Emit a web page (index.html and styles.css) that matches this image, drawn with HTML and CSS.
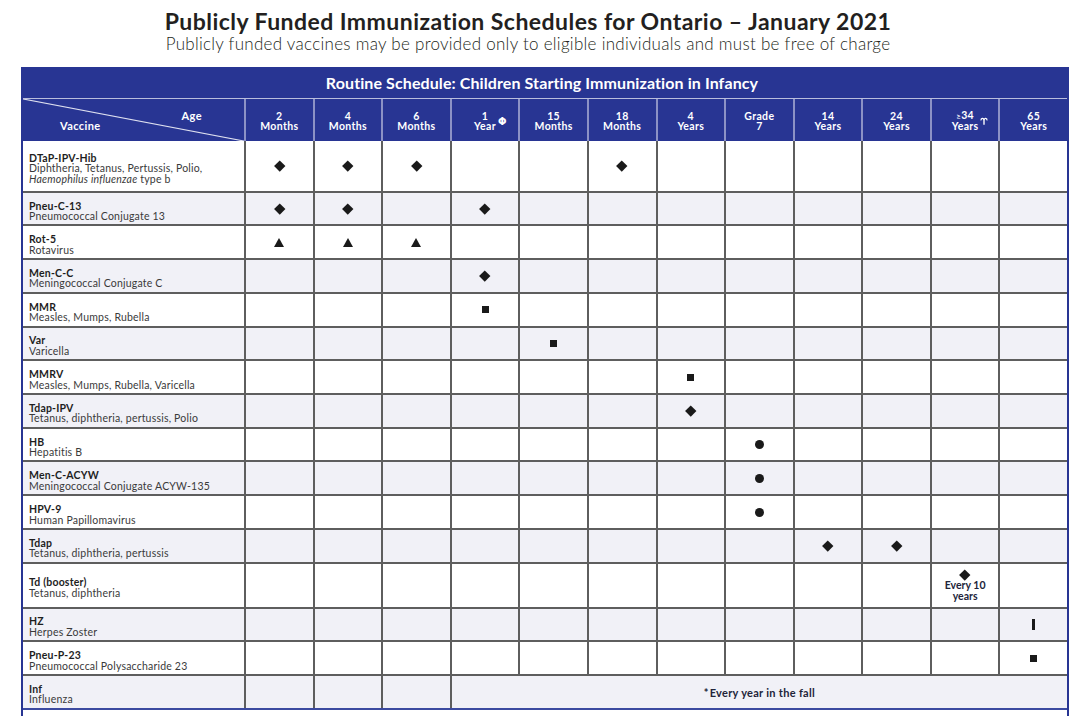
FILE: index.html
```html
<!DOCTYPE html>
<html lang="en">
<head>
<meta charset="utf-8">
<title>Publicly Funded Immunization Schedules for Ontario</title>
<link rel="stylesheet" href="styles.css">
</head>
<body>
<header class="doc-head">
  <h1 class="doc-title">Publicly Funded Immunization Schedules for Ontario – January 2021</h1>
  <p class="doc-sub">Publicly funded vaccines may be provided only to eligible individuals and must be free of charge</p>
</header>

<section class="sheet">
  <div class="sheet-title">Routine Schedule: Children Starting Immunization in Infancy</div>

  <div class="row head">
    <div class="hcell corner">
      <svg class="diag" viewBox="0 0 100 100" preserveAspectRatio="none"><line x1="0" y1="0" x2="100" y2="100" vector-effect="non-scaling-stroke"/></svg>
      <span class="age">Age</span>
      <span class="vac">Vaccine</span>
    </div>
    <div class="hcell"><span>2</span><span>Months</span></div>
    <div class="hcell"><span>4</span><span>Months</span></div>
    <div class="hcell"><span>6</span><span>Months</span></div>
    <div class="hcell"><span>1</span><span class="sup-line">Year<span class="sym">Φ</span></span></div>
    <div class="hcell"><span>15</span><span>Months</span></div>
    <div class="hcell"><span>18</span><span>Months</span></div>
    <div class="hcell"><span>4</span><span>Years</span></div>
    <div class="hcell"><span>Grade</span><span>7</span></div>
    <div class="hcell"><span>14</span><span>Years</span></div>
    <div class="hcell"><span>24</span><span>Years</span></div>
    <div class="hcell"><span><span class="ge">≥</span>34</span><span class="sup-line">Years<svg class="aries" viewBox="0 0 10 10" aria-label="Aries"><path d="M1.3 4.2 C1.1 1.4 4.6 0.6 5 4.2 L5 9.6 M5 4.2 C5.4 0.6 8.9 1.4 8.7 4.2"/></svg></span></div>
    <div class="hcell"><span>65</span><span>Years</span></div>
  </div>

  <div class="body">
    <div class="row tall">
      <div class="vcell"><b>DTaP-IPV-Hib</b><span>Diphtheria, Tetanus, Pertussis, Polio,</span><span><i>Haemophilus influenzae</i> type b</span></div>
      <div class="c"><i class="dia"></i></div><div class="c"><i class="dia"></i></div><div class="c"><i class="dia"></i></div>
      <div class="c"></div><div class="c"></div><div class="c"><i class="dia"></i></div>
      <div class="c"></div><div class="c"></div><div class="c"></div><div class="c"></div><div class="c"></div><div class="c"></div>
    </div>
    <div class="row alt">
      <div class="vcell"><b>Pneu-C-13</b><span>Pneumococcal Conjugate 13</span></div>
      <div class="c"><i class="dia"></i></div><div class="c"><i class="dia"></i></div><div class="c"></div>
      <div class="c"><i class="dia"></i></div><div class="c"></div><div class="c"></div>
      <div class="c"></div><div class="c"></div><div class="c"></div><div class="c"></div><div class="c"></div><div class="c"></div>
    </div>
    <div class="row">
      <div class="vcell"><b>Rot-5</b><span>Rotavirus</span></div>
      <div class="c"><i class="tri"></i></div><div class="c"><i class="tri"></i></div><div class="c"><i class="tri"></i></div>
      <div class="c"></div><div class="c"></div><div class="c"></div>
      <div class="c"></div><div class="c"></div><div class="c"></div><div class="c"></div><div class="c"></div><div class="c"></div>
    </div>
    <div class="row alt">
      <div class="vcell"><b>Men-C-C</b><span>Meningococcal Conjugate C</span></div>
      <div class="c"></div><div class="c"></div><div class="c"></div>
      <div class="c"><i class="dia"></i></div><div class="c"></div><div class="c"></div>
      <div class="c"></div><div class="c"></div><div class="c"></div><div class="c"></div><div class="c"></div><div class="c"></div>
    </div>
    <div class="row">
      <div class="vcell"><b>MMR</b><span>Measles, Mumps, Rubella</span></div>
      <div class="c"></div><div class="c"></div><div class="c"></div>
      <div class="c"><i class="sq"></i></div><div class="c"></div><div class="c"></div>
      <div class="c"></div><div class="c"></div><div class="c"></div><div class="c"></div><div class="c"></div><div class="c"></div>
    </div>
    <div class="row alt">
      <div class="vcell"><b>Var</b><span>Varicella</span></div>
      <div class="c"></div><div class="c"></div><div class="c"></div>
      <div class="c"></div><div class="c"><i class="sq"></i></div><div class="c"></div>
      <div class="c"></div><div class="c"></div><div class="c"></div><div class="c"></div><div class="c"></div><div class="c"></div>
    </div>
    <div class="row">
      <div class="vcell"><b>MMRV</b><span>Measles, Mumps, Rubella, Varicella</span></div>
      <div class="c"></div><div class="c"></div><div class="c"></div>
      <div class="c"></div><div class="c"></div><div class="c"></div>
      <div class="c"><i class="sq"></i></div><div class="c"></div><div class="c"></div><div class="c"></div><div class="c"></div><div class="c"></div>
    </div>
    <div class="row alt">
      <div class="vcell"><b>Tdap-IPV</b><span>Tetanus, diphtheria, pertussis, Polio</span></div>
      <div class="c"></div><div class="c"></div><div class="c"></div>
      <div class="c"></div><div class="c"></div><div class="c"></div>
      <div class="c"><i class="dia"></i></div><div class="c"></div><div class="c"></div><div class="c"></div><div class="c"></div><div class="c"></div>
    </div>
    <div class="row">
      <div class="vcell"><b>HB</b><span>Hepatitis B</span></div>
      <div class="c"></div><div class="c"></div><div class="c"></div>
      <div class="c"></div><div class="c"></div><div class="c"></div>
      <div class="c"></div><div class="c"><i class="dot"></i></div><div class="c"></div><div class="c"></div><div class="c"></div><div class="c"></div>
    </div>
    <div class="row alt">
      <div class="vcell"><b>Men-C-ACYW</b><span>Meningococcal Conjugate ACYW-135</span></div>
      <div class="c"></div><div class="c"></div><div class="c"></div>
      <div class="c"></div><div class="c"></div><div class="c"></div>
      <div class="c"></div><div class="c"><i class="dot"></i></div><div class="c"></div><div class="c"></div><div class="c"></div><div class="c"></div>
    </div>
    <div class="row">
      <div class="vcell"><b>HPV-9</b><span>Human Papillomavirus</span></div>
      <div class="c"></div><div class="c"></div><div class="c"></div>
      <div class="c"></div><div class="c"></div><div class="c"></div>
      <div class="c"></div><div class="c"><i class="dot"></i></div><div class="c"></div><div class="c"></div><div class="c"></div><div class="c"></div>
    </div>
    <div class="row alt">
      <div class="vcell"><b>Tdap</b><span>Tetanus, diphtheria, pertussis</span></div>
      <div class="c"></div><div class="c"></div><div class="c"></div>
      <div class="c"></div><div class="c"></div><div class="c"></div>
      <div class="c"></div><div class="c"></div><div class="c"><i class="dia"></i></div><div class="c"><i class="dia"></i></div><div class="c"></div><div class="c"></div>
    </div>
    <div class="row mid">
      <div class="vcell"><b>Td (booster)</b><span>Tetanus, diphtheria</span></div>
      <div class="c"></div><div class="c"></div><div class="c"></div>
      <div class="c"></div><div class="c"></div><div class="c"></div>
      <div class="c"></div><div class="c"></div><div class="c"></div><div class="c"></div>
      <div class="c stack"><i class="dia"></i><span class="note">Every 10<br>years</span></div>
      <div class="c"></div>
    </div>
    <div class="row alt">
      <div class="vcell"><b>HZ</b><span>Herpes Zoster</span></div>
      <div class="c"></div><div class="c"></div><div class="c"></div>
      <div class="c"></div><div class="c"></div><div class="c"></div>
      <div class="c"></div><div class="c"></div><div class="c"></div><div class="c"></div><div class="c"></div><div class="c"><i class="bar"></i></div>
    </div>
    <div class="row">
      <div class="vcell"><b>Pneu-P-23</b><span>Pneumococcal Polysaccharide 23</span></div>
      <div class="c"></div><div class="c"></div><div class="c"></div>
      <div class="c"></div><div class="c"></div><div class="c"></div>
      <div class="c"></div><div class="c"></div><div class="c"></div><div class="c"></div><div class="c"></div><div class="c"><i class="sq"></i></div>
    </div>
    <div class="row alt">
      <div class="vcell"><b>Inf</b><span>Influenza</span></div>
      <div class="c"></div><div class="c"></div><div class="c"></div>
      <div class="c span"><span class="note fall"><span class="star">*</span>Every year in the fall</span></div>
    </div>
  </div>
</section>
</body>
</html>
```

FILE: styles.css
```css
html, body {
  margin: 0;
  padding: 0;
  background: #ffffff;
}

body {
  font-family: Lato, "Open Sans", "Liberation Sans", sans-serif;
  color: #231f20;
  width: 1088px;
  height: 716px;
  overflow: hidden;
}

.doc-head {
  padding: 8px 32px 0 0;
  text-align: center;
  height: 59px;
}

.doc-title {
  margin: 0;
  font-size: 23px;
  letter-spacing: 0.45px;
  line-height: 27px;
  font-weight: 700;
  color: #231f20;
}

.doc-sub {
  margin: 0;
  font-size: 17px;
  letter-spacing: 0.28px;
  line-height: 18px;
  font-weight: 300;
  color: #231f20;
}

.sheet {
  margin-left: 21px;
  width: 1048px;
  box-sizing: border-box;
  border-left: 2px solid #283593;
  border-right: 2px solid #283593;
  height: 649px;
}

.sheet-title {
  height: 31px;
  background: #283593;
  color: #ffffff;
  font-weight: 700;
  font-size: 16px;
  letter-spacing: 0.1px;
  line-height: 31px;
  text-align: center;
  padding-right: 6px;
  border-bottom: 1px solid #b9bddc;
}

.row {
  display: grid;
  grid-template-columns: 221px repeat(12, 1fr);
  column-gap: 2px;
}

.head {
  height: 42px;
  background: #8c92c6;
}

.hcell {
  background: #283593;
  color: #ffffff;
  font-weight: 700;
  font-size: 10.5px;
  letter-spacing: 0.35px;
  line-height: 10px;
  display: flex;
  flex-direction: column;
  align-items: center;
  justify-content: center;
  padding-top: 1px;
}

.hcell .sup-line {
  position: relative;
}

.hcell .sym {
  position: absolute;
  left: 100%;
  top: -4px;
  margin-left: 2px;
  font-size: 10px;
  line-height: 10px;
  font-family: "DejaVu Sans", sans-serif;
  font-weight: 700;
}

.hcell .aries {
  position: absolute;
  left: 100%;
  top: -4px;
  margin-left: 1px;
  width: 8px;
  height: 8px;
  fill: none;
  stroke: #ffffff;
  stroke-width: 1.7;
}

.hcell .ge {
  font-size: 8px;
}

.corner {
  position: relative;
  align-items: stretch;
  justify-content: flex-start;
  padding-top: 12px;
  font-size: 11px;
  letter-spacing: 0.4px;
}

.corner .age {
  text-align: right;
  padding-right: 42px;
}

.corner .vac {
  text-align: left;
  padding-left: 37px;
}

.diag {
  position: absolute;
  left: 0;
  top: 0;
  width: 100%;
  height: 100%;
}

.diag line {
  stroke: #dfe1f0;
  stroke-width: 1.2;
}

.body {
  display: flex;
  flex-direction: column;
  gap: 2px;
  background: #5e5e5e;
  border-bottom: 2px solid #3c4aa0;
}

.body .row {
  height: 31.73px;
}

.body .row.tall {
  height: 49.7px;
}

.body .row.mid {
  height: 43px;
}

.vcell {
  background: #ffffff;
  display: flex;
  flex-direction: column;
  justify-content: center;
  padding: 5px 0 0 6px;
  font-size: 10.5px;
  letter-spacing: 0.2px;
  line-height: 10.5px;
  color: #3a3a3a;
  font-weight: 400;
}

.vcell b {
  color: #1e1e1e;
  font-weight: 700;
}

.c {
  background: #ffffff;
  display: flex;
  align-items: center;
  justify-content: center;
}

.alt .vcell,
.alt .c {
  background: #f1f1f7;
}

.c.span {
  grid-column: 5 / span 9;
}

.c.stack {
  flex-direction: column;
  padding-top: 2px;
}

.note {
  font-size: 10.5px;
  line-height: 10.5px;
  font-weight: 700;
  color: #22243a;
  text-align: center;
}

.note.fall {
  font-size: 11px;
  letter-spacing: 0.3px;
  padding-top: 2px;
}

.stack .note {
  margin-top: 2px;
}

.star {
  font-size: 11px;
  margin-right: 1px;
}

.dia {
  display: block;
  width: 7.5px;
  height: 7.5px;
  background: #1a1a1a;
  transform: rotate(45deg);
}

.tri {
  display: block;
  width: 0;
  height: 0;
  border-left: 5.5px solid transparent;
  border-right: 5.5px solid transparent;
  border-bottom: 9px solid #1a1a1a;
}

.sq {
  display: block;
  width: 7px;
  height: 7px;
  background: #1a1a1a;
}

.dot {
  display: block;
  width: 9px;
  height: 9px;
  border-radius: 50%;
  background: #1a1a1a;
}

.bar {
  display: block;
  width: 3.5px;
  height: 11px;
  background: #1a1a1a;
}
```
